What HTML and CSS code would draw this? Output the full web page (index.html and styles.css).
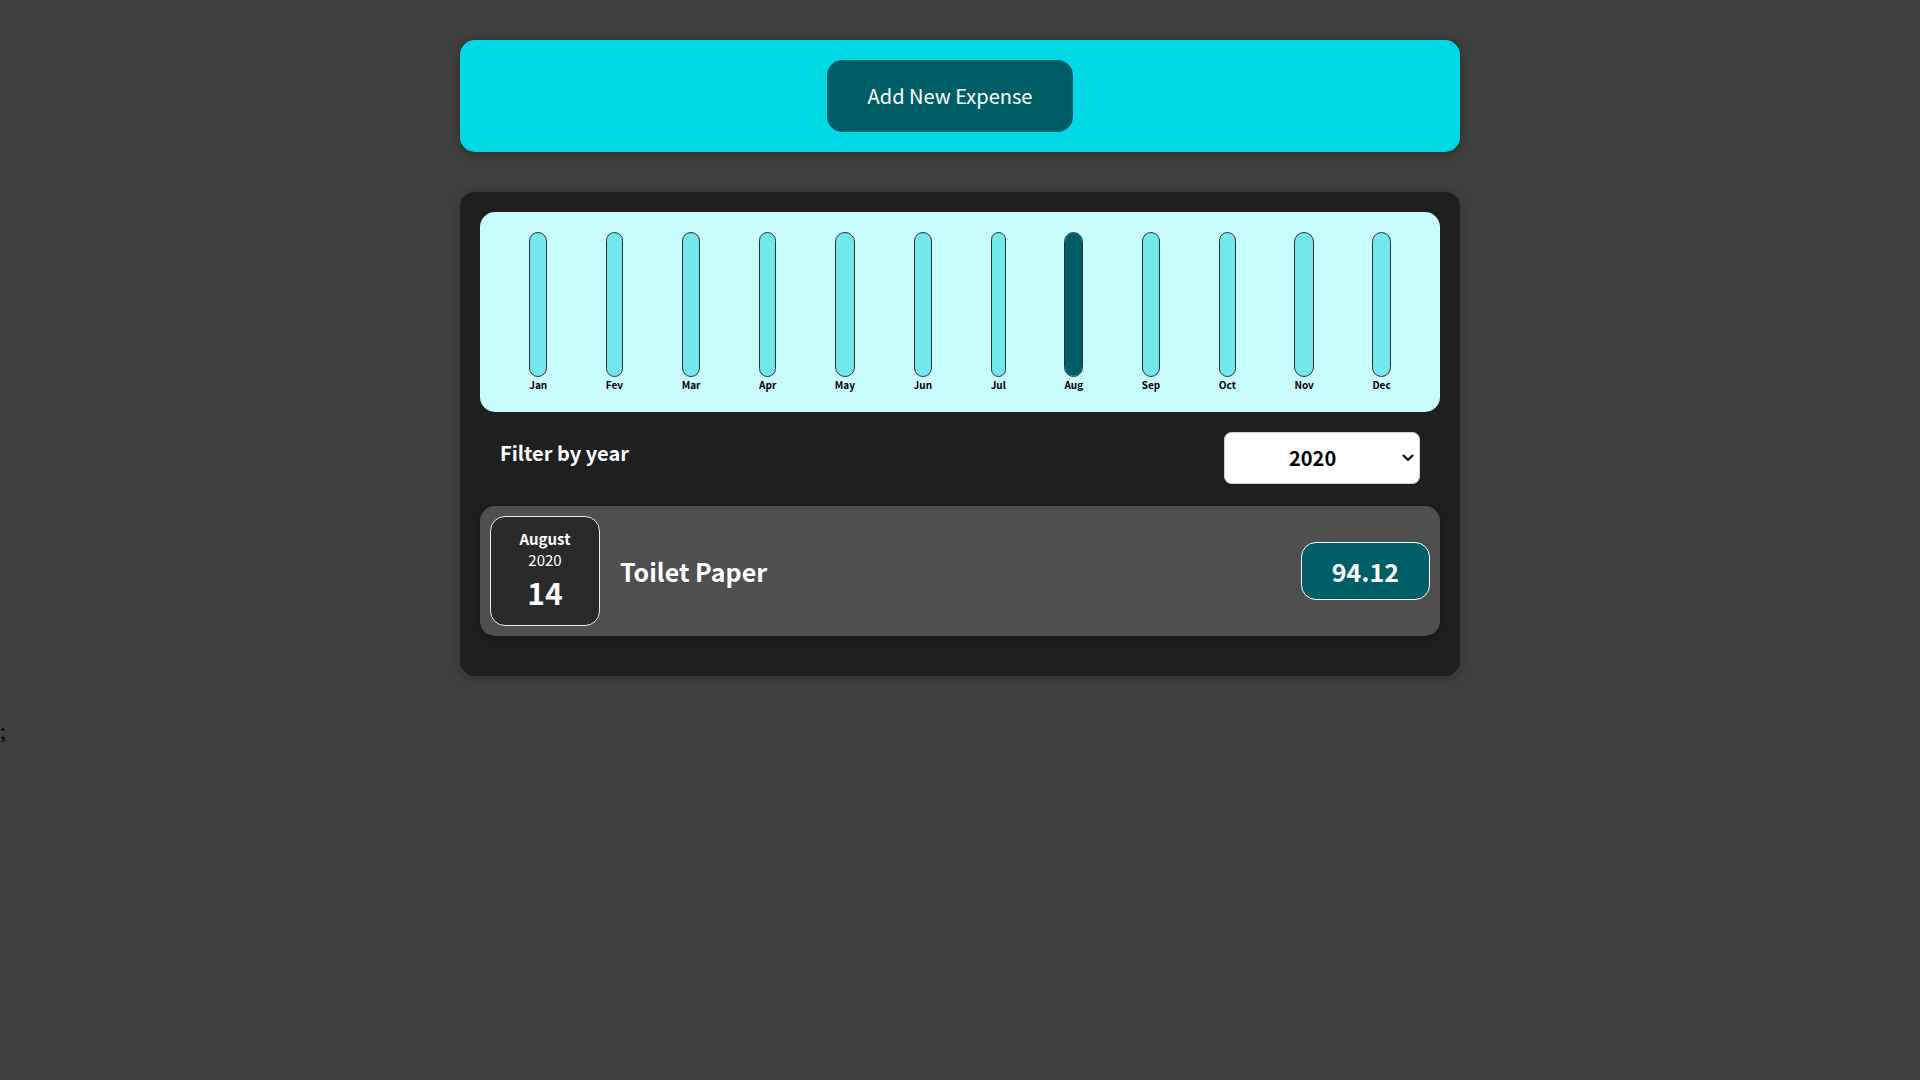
FILE: index.html
```html
<!DOCTYPE html>
<html lang="en">
<head>
<meta charset="utf-8">
<title>Expense Tracker</title>
<link rel="stylesheet" href="styles.css">
</head>
<body>
<div id="root">
  <div class="new-expense">
    <button class="new-expense__btn">Add New Expense</button>
  </div>
  <div class="card expenses">
    <div class="chart">
      <div class="chart-bar"><div class="chart-bar__inner"><div class="chart-bar__fill" style="height:0%"></div></div><div class="chart-bar__label">Jan</div></div>
      <div class="chart-bar"><div class="chart-bar__inner"><div class="chart-bar__fill" style="height:0%"></div></div><div class="chart-bar__label">Fev</div></div>
      <div class="chart-bar"><div class="chart-bar__inner"><div class="chart-bar__fill" style="height:0%"></div></div><div class="chart-bar__label">Mar</div></div>
      <div class="chart-bar"><div class="chart-bar__inner"><div class="chart-bar__fill" style="height:0%"></div></div><div class="chart-bar__label">Apr</div></div>
      <div class="chart-bar"><div class="chart-bar__inner"><div class="chart-bar__fill" style="height:0%"></div></div><div class="chart-bar__label">May</div></div>
      <div class="chart-bar"><div class="chart-bar__inner"><div class="chart-bar__fill" style="height:0%"></div></div><div class="chart-bar__label">Jun</div></div>
      <div class="chart-bar"><div class="chart-bar__inner"><div class="chart-bar__fill" style="height:0%"></div></div><div class="chart-bar__label">Jul</div></div>
      <div class="chart-bar"><div class="chart-bar__inner"><div class="chart-bar__fill" style="height:100%"></div></div><div class="chart-bar__label">Aug</div></div>
      <div class="chart-bar"><div class="chart-bar__inner"><div class="chart-bar__fill" style="height:0%"></div></div><div class="chart-bar__label">Sep</div></div>
      <div class="chart-bar"><div class="chart-bar__inner"><div class="chart-bar__fill" style="height:0%"></div></div><div class="chart-bar__label">Oct</div></div>
      <div class="chart-bar"><div class="chart-bar__inner"><div class="chart-bar__fill" style="height:0%"></div></div><div class="chart-bar__label">Nov</div></div>
      <div class="chart-bar"><div class="chart-bar__inner"><div class="chart-bar__fill" style="height:0%"></div></div><div class="chart-bar__label">Dec</div></div>
    </div>
    <div class="expenses-filter">
      <div class="expenses-filter__control">
        <label>Filter by year</label>
        <span class="select-wrap">
          <select>
            <option value="2022">2022</option>
            <option value="2021">2021</option>
            <option value="2020" selected>2020</option>
            <option value="2019">2019</option>
          </select>
          <svg class="select-arrow" width="12" height="8" viewBox="0 0 12 8" aria-hidden="true"><path d="M1.5 1.5 L6 6 L10.5 1.5" fill="none" stroke="#000" stroke-width="2" stroke-linecap="round" stroke-linejoin="round"/></svg>
        </span>
      </div>
    </div>
    <ul class="expenses-list">
      <li>
        <div class="card expense-item">
          <div class="expense-date">
            <div class="expense-date__month">August</div>
            <div class="expense-date__year">2020</div>
            <div class="expense-date__day">14</div>
          </div>
          <div class="expense-item__description">
            <h2>Toilet Paper</h2>
            <div class="expense-item__price">94.12</div>
          </div>
        </div>
      </li>
    </ul>
  </div>
</div>
;
</body>
</html>
```
FILE: styles.css
```css
* {
  box-sizing: border-box;
}

html {
  font-size: 20px;
  font-family: "Noto Sans CJK JP", "Noto Sans", sans-serif;
}

body {
  margin: 0;
  background-color: #3f3f3f;
}

.card {
  border-radius: 15px;
  box-shadow: 0 1.25px 10px rgba(0, 0, 0, 0.25);
}

.new-expense {
  background-color: #00d8e6;
  padding: 1rem;
  margin: 2rem auto;
  width: 50rem;
  max-width: 95%;
  border-radius: 15px;
  text-align: center;
  box-shadow: 0 1.25px 10px rgba(0, 0, 0, 0.25);
}

.new-expense__btn {
  font: inherit;
  cursor: pointer;
  padding: 20.5px 2rem 21px;
  border: 1px solid #005f66;
  background-color: #005f66;
  color: white;
  border-radius: 15px;
  margin-right: 1rem;
  line-height: 28px;
}

.expenses {
  padding: 1rem;
  background-color: rgb(31, 31, 31);
  margin: 2rem auto;
  width: 50rem;
  max-width: 95%;
}

.chart {
  padding: 1rem;
  border-radius: 15px;
  background-color: #c9fcfd;
  text-align: center;
  display: flex;
  justify-content: space-around;
  height: 10rem;
}

.chart-bar {
  height: 100%;
  display: flex;
  flex-direction: column;
  align-items: center;
}

.chart-bar__inner {
  height: 100%;
  width: 100%;
  border: 1px solid #313131;
  border-radius: 15px;
  background-color: #72e7ec;
  overflow: hidden;
  display: flex;
  flex-direction: column;
  justify-content: flex-end;
}

.chart-bar__fill {
  background-color: #005f66;
  width: 100%;
}

.chart-bar__label {
  font-weight: bold;
  font-size: 0.5rem;
  text-align: center;
}

.expenses-filter {
  color: white;
  padding: 0 1rem;
}

.expenses-filter__control {
  display: flex;
  width: 100%;
  align-items: center;
  justify-content: space-between;
  margin: 1rem 0 22px;
}

.expenses-filter__control label {
  font-weight: bold;
  margin-bottom: 0.5rem;
}

.select-wrap {
  position: relative;
  display: inline-block;
}

.select-wrap select {
  display: block;
  appearance: none;
  -webkit-appearance: none;
  font: inherit;
  font-weight: bold;
  color: #000;
  background-color: #fff;
  border: 1px solid #d0d0d0;
  padding: 10px 83px 10px 64px;
  border-radius: 7.5px;
  height: 52px;
  width: 196px;
}

.select-arrow {
  position: absolute;
  right: 6px;
  top: 50%;
  margin-top: -4px;
  pointer-events: none;
}

.expenses-list {
  list-style: none;
  padding: 0;
  margin: 0;
}

.expense-item {
  display: flex;
  justify-content: space-between;
  align-items: center;
  box-shadow: 0 2.5px 10px rgba(0, 0, 0, 0.25);
  padding: 0.5rem;
  margin: 1rem 0;
  background-color: #4f4f4f;
}

.expense-item__description {
  display: flex;
  flex-direction: row;
  align-items: center;
  justify-content: flex-start;
  flex: 1;
}

.expense-item__description h2 {
  font-size: 1.25rem;
  flex: 1;
  margin: 0 1rem;
  color: white;
}

.expense-item__price {
  font-size: 1.25rem;
  font-weight: bold;
  color: white;
  background-color: #005f66;
  border: 1px solid white;
  padding: 0.5rem 1.5rem;
  border-radius: 15px;
}

.expense-date {
  display: flex;
  flex-direction: column;
  width: 5.5rem;
  height: 5.5rem;
  border: 1px solid #ececec;
  background-color: #2a2a2a;
  color: white;
  border-radius: 15px;
  align-items: center;
  justify-content: center;
}

.expense-date__month {
  font-size: 0.75rem;
  font-weight: bold;
}

.expense-date__year {
  font-size: 0.75rem;
}

.expense-date__day {
  font-size: 1.5rem;
  font-weight: bold;
}
```
